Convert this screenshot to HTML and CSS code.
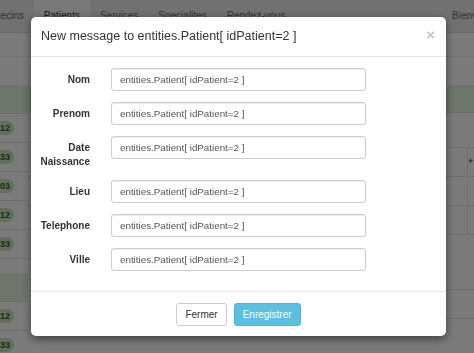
FILE: index.html
```html
<!DOCTYPE html>
<html lang="fr">
<head>
    <meta charset="UTF-8">
    <title>Patients</title>
    <link rel="stylesheet" href="styles.css">
</head>
<body>
    <nav class="navbar">
        <ul class="nav">
            <li>Medecins</li>
            <li class="active">Patients</li>
            <li>Services</li>
            <li>Specialites</li>
            <li>Rendez-vous</li>
        </ul>
        <span class="welcome">Bienvenue admin</span>
    </nav>

    <div class="page">
        <div class="page-head"></div>
        <div class="content">
            <div class="side">
                <div class="row head"></div>
                <div class="row"><span class="badge">12</span></div>
                <div class="row"><span class="badge">33</span></div>
                <div class="row"><span class="badge">03</span></div>
                <div class="row"><span class="badge">12</span></div>
                <div class="row"><span class="badge">33</span></div>
                <div class="spacer"></div>
                <div class="row head"></div>
                <div class="row"><span class="badge">12</span></div>
                <div class="row"><span class="badge">33</span></div>
            </div>
            <div class="main">
                <div class="trow head"></div>
                <div class="trow tall"></div>
                <div class="trow"><span class="cell">+</span></div>
                <div class="trow"><span class="cell"></span></div>
                <div class="trow"><span class="cell"></span></div>
                <div class="trow tall2"></div>
                <div class="trow"></div>
                <div class="trow"></div>
            </div>
        </div>
    </div>

    <div class="backdrop"></div>

    <div class="modal">
        <div class="modal-header">
            <h4 class="modal-title">New message to entities.Patient[ idPatient=2 ]</h4>
            <span class="close">&times;</span>
        </div>
        <form class="modal-body">
            <div class="form-group">
                <label>Nom</label>
                <input type="text" value="entities.Patient[ idPatient=2 ]">
            </div>
            <div class="form-group">
                <label>Prenom</label>
                <input type="text" value="entities.Patient[ idPatient=2 ]">
            </div>
            <div class="form-group">
                <label>Date<br>Naissance</label>
                <input type="text" value="entities.Patient[ idPatient=2 ]">
            </div>
            <div class="form-group">
                <label>Lieu</label>
                <input type="text" value="entities.Patient[ idPatient=2 ]">
            </div>
            <div class="form-group">
                <label>Telephone</label>
                <input type="text" value="entities.Patient[ idPatient=2 ]">
            </div>
            <div class="form-group">
                <label>Ville</label>
                <input type="text" value="entities.Patient[ idPatient=2 ]">
            </div>
        </form>
        <div class="modal-footer">
            <button type="button" class="btn">Fermer</button>
            <button type="button" class="btn btn-info">Enregistrer</button>
        </div>
    </div>
</body>
</html>
```

FILE: styles.css
```css
body{
    margin: 0;
    height: 100vh;
    overflow: hidden;
    background-color: #f6f6f6;
    font-family: "Liberation Sans", Arial, sans-serif;
    color: #333;
}
.navbar{
    display: flex;
    height: 32px;
    background-color: #e2e2e2;
    border-bottom: 1px solid #d4d4d4;
    font-size: 10px;
    color: #666;
}
.nav{
    display: flex;
    list-style: none;
    margin: 0 0 0 -29px;
    padding: 0;
}
.nav li{
    padding: 10px 10px 0;
}
.nav .active{
    background-color: #f0f0f0;
    color: #333;
}
.welcome{
    margin-left: auto;
    width: 22px;
    padding-top: 10px;
    white-space: nowrap;
}
.page-head{
    height: 23px;
    border-bottom: 1px solid #e4e4e4;
    margin-bottom: 28px;
}
.content{
    display: flex;
}
.side{
    width: 58px;
    margin-left: -30px;
    flex-shrink: 0;
}
.row{
    height: 28px;
    border-top: 1px solid #dcdcdc;
    display: flex;
    align-items: center;
    justify-content: flex-end;
    padding-right: 14px;
}
.row.head{
    background-color: #dcebd4;
    border-top: none;
}
.spacer{
    height: 14px;
    border-top: 1px solid #dcdcdc;
}
.badge{
    background-color: #c2dfb8;
    color: #2f5a2a;
    font-size: 9px;
    font-weight: bold;
    border-radius: 8px;
    padding: 2px 4px 2px 10px;
}
.main{
    flex: 1;
}
.trow{
    height: 28px;
    border-top: 1px solid #dcdcdc;
    display: flex;
    justify-content: flex-end;
}
.trow.head{
    height: 27px;
    background-color: #dcebd4;
    border-top: none;
}
.trow.tall{
    height: 34px;
}
.trow.tall2{
    height: 54px;
}
.cell{
    width: 6px;
    border-left: 1px solid #dcdcdc;
    padding-top: 8px;
    font-size: 9px;
    color: #222;
}

.backdrop{
    position: fixed;
    inset: 0;
    background-color: rgba(0, 0, 0, 0.5);
}
.modal{
    position: absolute;
    top: 17px;
    left: 31px;
    width: 415px;
    background-color: #fff;
    border-radius: 5px;
    box-shadow: 0 3px 9px rgba(0, 0, 0, 0.5);
}
.modal-header{
    display: flex;
    align-items: center;
    padding: 10px 11px 10px 10px;
    border-bottom: 1px solid #e5e5e5;
}
.modal-title{
    margin: 0;
    font-size: 12.5px;
    font-weight: normal;
    line-height: 19px;
    color: #333;
}
.close{
    margin-left: auto;
    margin-top: -4px;
    font-size: 15px;
    font-weight: bold;
    color: #c4c4c4;
}
.modal-body{
    display: flex;
    flex-direction: column;
    gap: 11px;
    margin: 0;
    padding: 11px 0 20px;
}
.form-group{
    display: grid;
    grid-template-columns: 80px 255px;
    align-items: start;
}
.form-group label{
    padding: 5px 21px 0 0;
    text-align: right;
    font-size: 10px;
    font-weight: bold;
    line-height: 14px;
    color: #333;
}
.form-group input{
    box-sizing: border-box;
    height: 23px;
    margin: 0;
    padding: 0 8px;
    border: 1px solid #ccc;
    border-radius: 3px;
    box-shadow: inset 0 1px 1px rgba(0, 0, 0, 0.07);
    font-family: "Liberation Sans", Arial, sans-serif;
    font-size: 9.8px;
    color: #555;
}
.modal-footer{
    display: flex;
    justify-content: center;
    gap: 7px;
    padding: 11px 0 10px;
    border-top: 1px solid #e5e5e5;
}
.btn{
    height: 23px;
    padding: 0 8px;
    border: 1px solid #ccc;
    border-radius: 3px;
    background-color: #fff;
    font-family: "Liberation Sans", Arial, sans-serif;
    font-size: 10px;
    color: #333;
}
.btn-info{
    background-color: #5bc0de;
    border-color: #46b8da;
    color: #fff;
}
```
